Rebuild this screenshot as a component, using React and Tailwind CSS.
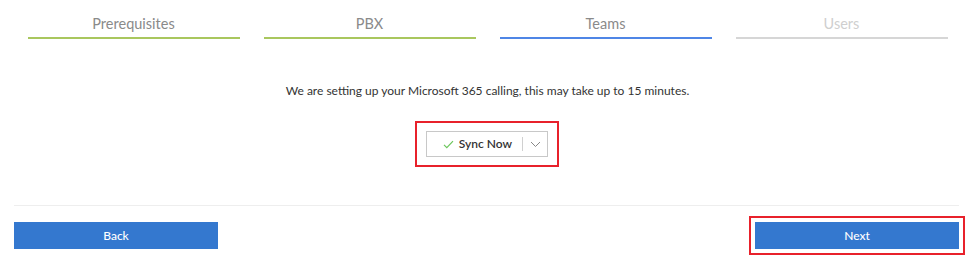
import React from 'react';

const steps = [
  { label: 'Prerequisites', bar: 'bg-[#a9c75e]', text: 'text-[#8a8a8a]' },
  { label: 'PBX', bar: 'bg-[#a9c75e]', text: 'text-[#8a8a8a]' },
  { label: 'Teams', bar: 'bg-[#4f86e6]', text: 'text-[#8a8a8a]' },
  { label: 'Users', bar: 'bg-[#d6d6d6]', text: 'text-[#cfcfcf]' }
];

const App = () => {
  return (
    <div className="w-[975px] h-[273px] bg-white font-['Lato',sans-serif] overflow-hidden">
      <div className="flex justify-center gap-[24px] pt-[13px]">
        {steps.map((s) => (
          <div key={s.label} className="w-[212px] flex flex-col items-center">
            <span className={`text-[14.5px] leading-[22px] ${s.text}`}>{s.label}</span>
            <div className={`mt-[2px] w-full h-[2px] ${s.bar}`} />
          </div>
        ))}
      </div>

      <p className="mt-[43px] text-center text-[12px] leading-[18px] text-[#333]">
        We are setting up your Microsoft 365 calling, this may take up to 15 minutes.
      </p>

      <div className="flex justify-center mt-[21px] ml-[-1px]">
        <div className="border-2 border-[#e8212b] w-[144px] h-[46px] flex items-center justify-center">
          <div className="flex items-center w-[122px] h-[26px] border border-[#c8c8c8] bg-white">
            <div className="flex-1 flex items-center justify-center gap-[5px] pl-[6px]">
              <svg width="11" height="9" viewBox="0 0 11 9" fill="none">
                <path d="M1 4.8 L3.8 7.6 L10 1.2" stroke="#6cc65c" strokeWidth="1.2" />
              </svg>
              <span className="text-[12px] font-semibold text-[#333]">Sync Now</span>
            </div>
            <div className="w-px h-[14px] bg-[#d0d0d0]" />
            <div className="w-[24px] flex items-center justify-center">
              <svg width="11" height="7" viewBox="0 0 11 7" fill="none">
                <path d="M1 1 L5.5 5.5 L10 1" stroke="#888" strokeWidth="1" />
              </svg>
            </div>
          </div>
        </div>
      </div>

      <div className="mx-[14px] mr-[16px] mt-[38px] h-px bg-[#eeeeee]" />

      <div className="flex justify-between items-center pl-[14px] pr-[10px] mt-[10px]">
        <button className="w-[204px] h-[27px] bg-[#3478cf] text-white text-[12px] font-medium">
          Back
        </button>
        <div className="border-2 border-[#e8212b] p-[4px]">
          <button className="block w-[204px] h-[27px] bg-[#3478cf] text-white text-[12px] font-medium">
            Next
          </button>
        </div>
      </div>
    </div>
  );
};

export default App;
